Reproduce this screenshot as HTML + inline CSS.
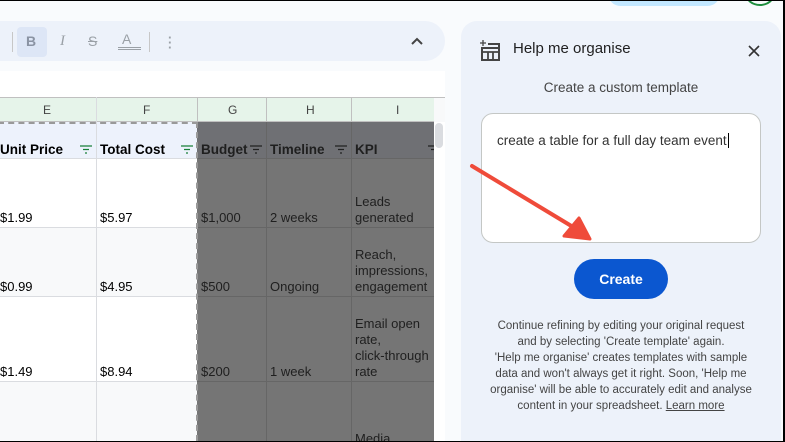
<!DOCTYPE html>
<html><head><style>
*{margin:0;padding:0;box-sizing:border-box}
html{overflow:hidden}
body{width:785px;height:442px;overflow:hidden;background:#000;font-family:"Liberation Sans",Arial,sans-serif;position:relative}
#pg{position:absolute;left:0;top:1px;width:783px;height:440px;background:#f9fbfd;overflow:hidden}
.a{position:absolute}
.c{position:absolute;font-size:13px;color:#000}
.g{color:#1f1f1f}
.h{font-size:13.5px;font-weight:bold}
</style></head><body>
<div id="pg">
<div class="a" style="left:608px;top:-20px;width:112px;height:25px;background:#c2e7ff;border-radius:14px"></div>
<div class="a" style="left:745px;top:-20px;width:30px;height:25px;border:2px solid #1e8e3e;border-radius:50%"></div>
<div class="a" style="left:-20px;top:20px;width:465px;height:40px;background:#edf2fa;border-radius:20px"></div>
<div class="a" style="left:12px;top:31px;width:1px;height:20px;background:#c7c7c7"></div>
<div class="a" style="left:17px;top:26px;width:30px;height:30px;background:#dde6f6;border-radius:4px"></div>
<div class="a" style="left:26px;top:32px;font-weight:bold;font-size:14px;color:#8a93a3">B</div>
<div class="a" style="left:60px;top:32px;font-style:italic;font-size:15px;color:#9aa0a6;font-family:'Liberation Serif',serif">I</div>
<div class="a" style="left:88px;top:32px;font-size:14px;color:#9aa0a6;text-decoration:line-through">S</div>
<div class="a" style="left:122px;top:30px;font-size:14px;color:#9aa0a6">A</div>
<div class="a" style="left:118px;top:46px;width:23px;height:3px;border-top:1px solid #9aa0a6;border-bottom:1px solid #9aa0a6"></div>
<div class="a" style="left:149px;top:31px;width:1px;height:20px;background:#c7c7c7"></div>
<div class="a" style="left:168px;top:34px;font-size:13px;color:#9aa0a6;line-height:5px;font-weight:bold">·<br>·<br>·</div>
<svg class="a" style="left:410px;top:36px" width="14" height="10"><path d="M2 7 L7 2 L12 7" stroke="#444" stroke-width="2" fill="none"/></svg>
<div class="a" style="left:0;top:70px;width:445px;height:370px;background:#fff"></div>
<div class="a" style="left:0;top:96px;width:434px;height:25px;background:#e6f4ea;border-top:1px solid #c0c0c0;border-bottom:1px solid #c0c0c0"></div>
<div class="a" style="left:434px;top:96px;width:11px;height:25px;background:#f8f9fa;border-top:1px solid #c0c0c0"></div>
<div class="c" style="left:43px;top:102px;font-size:12px;color:#444">E</div>
<div class="c" style="left:143px;top:102px;font-size:12px;color:#444">F</div>
<div class="c" style="left:228px;top:102px;font-size:12px;color:#444">G</div>
<div class="c" style="left:306px;top:102px;font-size:12px;color:#444">H</div>
<div class="c" style="left:396px;top:102px;font-size:12px;color:#444">I</div>
<div class="a" style="left:0;top:121px;width:197px;height:36px;background:#edf2fc"></div>
<div class="a" style="left:0;top:226px;width:197px;height:69px;background:#f8f9fa"></div>
<div class="a" style="left:0;top:380px;width:197px;height:60px;background:#f8f9fa"></div>
<div class="a" style="left:197px;top:121px;width:237px;height:319px;background:#757575"></div>
<div class="a" style="left:197px;top:121px;width:237px;height:36px;background:#6f7074"></div>
<div class="a" style="left:96px;top:96px;width:1px;height:344px;background:#dadce0"></div>
<div class="a" style="left:197px;top:96px;width:1px;height:25px;background:#c0c0c0"></div>
<div class="a" style="left:266px;top:96px;width:1px;height:25px;background:#c0c0c0"></div>
<div class="a" style="left:351px;top:96px;width:1px;height:25px;background:#c0c0c0"></div>
<div class="a" style="left:266px;top:121px;width:1px;height:319px;background:#666"></div>
<div class="a" style="left:351px;top:121px;width:1px;height:319px;background:#666"></div>
<div class="a" style="left:0;top:157px;width:197px;height:1px;background:#dadce0"></div>
<div class="a" style="left:0;top:226px;width:197px;height:1px;background:#dadce0"></div>
<div class="a" style="left:0;top:295px;width:197px;height:1px;background:#dadce0"></div>
<div class="a" style="left:0;top:380px;width:197px;height:1px;background:#dadce0"></div>
<div class="a" style="left:197px;top:157px;width:237px;height:1px;background:#666"></div>
<div class="a" style="left:197px;top:226px;width:237px;height:1px;background:#666"></div>
<div class="a" style="left:197px;top:295px;width:237px;height:1px;background:#666"></div>
<div class="a" style="left:197px;top:380px;width:237px;height:1px;background:#666"></div>
<div class="a" style="left:-2px;top:121px;width:200px;height:319px;border:2px dashed #999;border-left:none;border-bottom:none"></div>
<div class="a" style="left:435px;top:122px;width:8px;height:25px;background:#dadce0;border-radius:4px"></div>
<div class="c h" style="left:0;top:141px">Unit Price</div>
<div class="c h" style="left:100px;top:141px">Total Cost</div>
<div class="c g h" style="left:201px;top:141px">Budget</div>
<div class="c g h" style="left:270px;top:141px">Timeline</div>
<div class="c g h" style="left:355px;top:141px">KPI</div>
<svg class="a" style="left:80px;top:144px" width="12" height="9"><path d="M0 1h12M3 4.5h6M5 8h2" stroke="#188038" stroke-width="1.3"/></svg>
<svg class="a" style="left:181px;top:144px" width="12" height="9"><path d="M0 1h12M3 4.5h6M5 8h2" stroke="#188038" stroke-width="1.3"/></svg>
<svg class="a" style="left:250px;top:144px" width="12" height="9"><path d="M0 1h12M3 4.5h6M5 8h2" stroke="#222" stroke-width="1.3"/></svg>
<svg class="a" style="left:335px;top:144px" width="12" height="9"><path d="M0 1h12M3 4.5h6M5 8h2" stroke="#222" stroke-width="1.3"/></svg>
<svg class="a" style="left:428px;top:144px" width="6" height="9"><path d="M0 1h12M3 4.5h6" stroke="#222" stroke-width="1.3"/></svg>
<div class="c" style="left:0;top:209px">$1.99</div>
<div class="c" style="left:100px;top:209px">$5.97</div>
<div class="c g" style="left:201px;top:209px">$1,000</div>
<div class="c g" style="left:270px;top:209px">2 weeks</div>
<div class="c g" style="left:355px;top:193px;line-height:16px">Leads<br>generated</div>
<div class="c" style="left:0;top:278px">$0.99</div>
<div class="c" style="left:100px;top:278px">$4.95</div>
<div class="c g" style="left:201px;top:278px">$500</div>
<div class="c g" style="left:270px;top:278px">Ongoing</div>
<div class="c g" style="left:355px;top:246px;line-height:16px">Reach,<br>impressions,<br>engagement</div>
<div class="c" style="left:0;top:363px">$1.49</div>
<div class="c" style="left:100px;top:363px">$8.94</div>
<div class="c g" style="left:201px;top:363px">$200</div>
<div class="c g" style="left:270px;top:363px">1 week</div>
<div class="c g" style="left:355px;top:315px;line-height:16px">Email open<br>rate,<br>click-through<br>rate</div>
<div class="c g" style="left:355px;top:430px">Media</div>
<div class="a" style="left:461px;top:20px;width:320px;height:440px;background:#edf2fa;border-radius:16px"></div>
<svg class="a" style="left:479px;top:38px" width="22" height="22"><path d="M4 1v6M1 4h6" stroke="#444" stroke-width="1.3"/><rect x="3" y="9" width="17" height="12" fill="none" stroke="#444" stroke-width="2"/><path d="M3 13h17M9 13v8M14 13v8" stroke="#444" stroke-width="1.8"/><path d="M9 5h11v4" stroke="#444" stroke-width="2" fill="none"/></svg>
<div class="a" style="left:513px;top:39px;font-size:15px;color:#1f1f1f">Help me organise</div>
<svg class="a" style="left:748px;top:44px" width="12" height="12"><path d="M1 1L11 11M11 1L1 11" stroke="#333" stroke-width="1.6"/></svg>
<div class="a" style="left:461px;top:79px;width:320px;text-align:center;font-size:13.5px;color:#444">Create a custom template</div>
<div class="a" style="left:481px;top:112px;width:280px;height:130px;background:#fff;border:1px solid #c4c7c5;border-radius:12px"></div>
<div class="a" style="left:497px;top:132px;font-size:13.5px;color:#333">create a table for a full day team event<span style="border-left:1px solid #000;margin-left:1px"></span></div>
<div class="a" style="left:574px;top:258px;width:94px;height:40px;background:#0b57d0;border-radius:20px;color:#fff;font-weight:bold;font-size:14px;text-align:center;line-height:40px">Create</div>
<div class="a" style="left:461px;top:317px;width:320px;text-align:center;font-size:11.5px;line-height:16px;color:#444;white-space:nowrap">Continue refining by editing your original request<br>and by selecting 'Create template' again.<br>'Help me organise' creates templates with sample<br>data and won't always get it right. Soon, 'Help me<br>organise' will be able to accurately edit and analyse<br>content in your spreadsheet. <u>Learn more</u></div>
<svg class="a" style="left:460px;top:155px" width="150" height="95"><path d="M12 10 L118 74" stroke="#ef4b3a" stroke-width="4" stroke-linecap="round"/><path d="M130 83 L104 80 L119 62 Z" fill="#ef4b3a" stroke="#ef4b3a" stroke-width="3" stroke-linejoin="round"/></svg>
</div>
</body></html>
